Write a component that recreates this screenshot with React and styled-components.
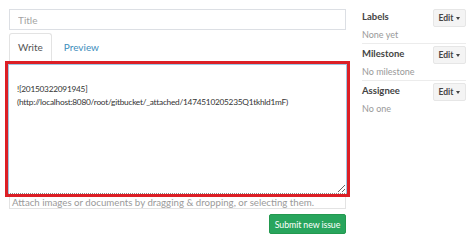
import styled, { createGlobalStyle } from "styled-components";

const GlobalStyle = createGlobalStyle`
  html, body {
    margin: 0;
    padding: 0;
    background: #fff;
  }
  body {
    font-family: "Lato", "Liberation Sans", sans-serif;
    color: #333;
  }
`;

const Page = styled.div`
  display: flex;
  gap: 16px;
  padding: 9px 8px 0 9px;
`;

const Main = styled.div`
  width: 337px;
  display: flex;
  flex-direction: column;
`;

const TitleInput = styled.input`
  box-sizing: border-box;
  height: 21px;
  width: 100%;
  border: 1px solid #dcdfe4;
  padding: 0 8px;
  font-family: inherit;
  font-size: 10px;
  outline: none;
  &::placeholder {
    color: #a3a3a3;
  }
`;

const Tabs = styled.div`
  display: flex;
  margin-top: 3px;
  height: 28px;
`;

const Tab = styled.div`
  box-sizing: border-box;
  display: flex;
  align-items: center;
  padding: 0 ${(p) => (p.$active ? "8px" : "11px")};
  font-size: 10px;
  color: ${(p) => (p.$active ? "#555" : "#3c8dbc")};
  border: 1px solid ${(p) => (p.$active ? "#e3e3e3" : "transparent")};
  border-bottom: none;
  border-radius: 3px 3px 0 0;
  padding-bottom: 2px;
`;

const Highlight = styled.div`
  margin: 0 -4px;
  border: 3px solid #dc1f26;
  display: flex;
`;

const Editor = styled.textarea`
  box-sizing: border-box;
  display: block;
  width: 100%;
  height: 130px;
  margin: 0;
  border: 1px solid #9fc6e4;
  border-bottom: 1px dotted #8a8a8a;
  padding: 18px 8px 0 8px;
  font-family: inherit;
  font-size: 8.3px;
  letter-spacing: -0.25px;
  line-height: 13px;
  color: #333;
  outline: none;
  resize: vertical;
`;

const AttachBar = styled.div`
  box-sizing: border-box;
  height: 12px;
  border: 1px solid #e3e3e3;
  border-top: none;
  padding: 0 2px;
  font-size: 9.7px;
  line-height: 10px;
  color: #9a9a9a;
  white-space: nowrap;
`;

const Actions = styled.div`
  display: flex;
  justify-content: flex-end;
  margin-top: 5px;
`;

const SubmitButton = styled.button`
  box-sizing: border-box;
  height: 20px;
  width: 77px;
  padding: 0;
  border: 1px solid #23994f;
  border-radius: 2px;
  background: #28a55d;
  color: #fff;
  font-family: inherit;
  font-size: 8.8px;
  letter-spacing: -0.1px;
`;

const Sidebar = styled.div`
  width: 104px;
  display: flex;
  flex-direction: column;
`;

const Section = styled.div`
  padding-top: ${(p) => (p.$first ? "0" : "2px")};
  padding-bottom: 2px;
  border-bottom: ${(p) => (p.$last ? "none" : "1px solid #ececec")};
`;

const SectionHead = styled.div`
  display: flex;
  justify-content: space-between;
  align-items: center;
  height: 18px;
`;

const SectionTitle = styled.span`
  font-size: 9.5px;
  font-weight: bold;
  color: #444;
  margin-top: -4px;
`;

const EditButton = styled.button`
  box-sizing: border-box;
  height: 18px;
  width: 33px;
  padding: 0;
  border: 1px solid #e6e6e6;
  border-radius: 2px;
  background: #f4f4f4;
  color: #444;
  font-family: inherit;
  font-size: 8.5px;
  font-weight: bold;
  display: flex;
  align-items: center;
  justify-content: center;
  gap: 3px;
`;

const Caret = styled.span`
  width: 0;
  height: 0;
  border-left: 2.5px solid transparent;
  border-right: 2.5px solid transparent;
  border-top: 3px solid #444;
`;

const SectionValue = styled.div`
  margin-top: 1px;
  font-size: 9px;
  line-height: 13px;
  color: #999;
`;

const sections = [
  { title: "Labels", value: "None yet" },
  { title: "Milestone", value: "No milestone" },
  { title: "Assignee", value: "No one" },
];

const App = () => {
  return (
    <>
      <GlobalStyle />
      <Page>
        <Main>
          <TitleInput placeholder="Title" />
          <Tabs>
            <Tab $active>Write</Tab>
            <Tab>Preview</Tab>
          </Tabs>
          <Highlight>
            <Editor
              defaultValue={
                "![20150322091945]\n(http://localhost:8080/root/gitbucket/_attached/1474510205235Q1tkhld1mF)"
              }
            />
          </Highlight>
          <AttachBar>
            Attach images or documents by dragging &amp; dropping, or selecting them.
          </AttachBar>
          <Actions>
            <SubmitButton>Submit new issue</SubmitButton>
          </Actions>
        </Main>
        <Sidebar>
          {sections.map((s, i) => (
            <Section key={s.title} $first={i === 0} $last={i === sections.length - 1}>
              <SectionHead>
                <SectionTitle>{s.title}</SectionTitle>
                <EditButton>
                  Edit <Caret />
                </EditButton>
              </SectionHead>
              <SectionValue>{s.value}</SectionValue>
            </Section>
          ))}
        </Sidebar>
      </Page>
    </>
  );
};

export default App;
